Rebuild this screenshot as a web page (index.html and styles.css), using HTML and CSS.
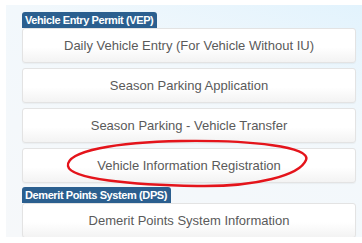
FILE: index.html
```html
<!DOCTYPE html>
<html lang="en">
<head>
    <meta charset="UTF-8">
    <title>Vehicle Services</title>
    <link rel="stylesheet" href="styles.css">
</head>
<body>

<div class="panel">
    <!-- VEP group -->
    <div class="group">
        <div class="group-label">Vehicle Entry Permit (VEP)</div>
        <div class="menu-btn">Daily Vehicle Entry (For Vehicle Without IU)</div>
        <div class="menu-btn">Season Parking Application</div>
        <div class="menu-btn">Season Parking - Vehicle Transfer</div>
        <div class="menu-btn marked">
            Vehicle Information Registration
            <svg class="circle-mark" viewBox="0 0 252 54" width="252" height="54">
                <path d="M6 29 C 4 14, 55 5, 119 4 C 190 3, 250 10, 244 23 C 238 38, 195 50, 135 49 C 70 48, 8 42, 6 29"
                      fill="none" stroke="#e4141b" stroke-width="2.4" stroke-linecap="round"/>
            </svg>
        </div>
    </div>

    <!-- DPS group -->
    <div class="group">
        <div class="group-label">Demerit Points System (DPS)</div>
        <div class="menu-btn">Demerit Points System Information</div>
    </div>
</div>

</body>
</html>
```

FILE: styles.css
```css
body {
    margin: 0;
    font-family: "Liberation Sans", Arial, sans-serif;
    background-color: #ffffff;
}
.panel {
    margin: 5px 0 0 6px;
    padding: 7px 6px 0 16px;
    height: 232px;
    box-sizing: border-box;
    background: linear-gradient(200deg, #e2f3fd 0%, #f2f8fc 35%, #f6f8fa 100%);
    display: flex;
    flex-direction: column;
    gap: 4px;
}
.group {
    display: flex;
    flex-direction: column;
    gap: 5px;
}
.group-label {
    align-self: flex-start;
    background-color: #2b5f8f;
    color: #ffffff;
    font-size: 11px;
    font-weight: bold;
    letter-spacing: -0.4px;
    padding: 0 4px 0 3px;
    height: 16px;
    line-height: 16px;
    border-radius: 3px 3px 0 0;
    margin-bottom: -5px; /* label sits right on the button */
}
.menu-btn {
    position: relative;
    flex-shrink: 0;
    height: 35px;
    line-height: 33px;
    box-sizing: border-box;
    text-align: center;
    font-size: 13px;
    color: #5a5a5a;
    background: linear-gradient(#ffffff 0%, #ffffff 55%, #f3f3f3 100%);
    border: 1px solid #e3e3e3;
    border-radius: 3px;
    box-shadow: 0 1px 1px rgba(0, 0, 0, 0.04);
}
.circle-mark {
    position: absolute;
    left: 39px;
    top: -12px;
    pointer-events: none;
}
```
